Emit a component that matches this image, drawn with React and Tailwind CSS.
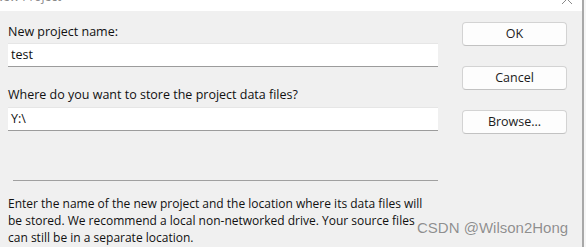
const FONT = { fontFamily: '"Open Sans", "Noto Sans", sans-serif' };

function Field({ value }) {
  return (
    <div className="h-[24px] w-[430px] bg-white border-t border-t-[#e6e6e6] border-b border-b-[#9c9c9c] flex items-center pl-[3px] text-[12.5px] text-[#111]">
      {value}
    </div>
  );
}

function Btn({ children }) {
  return (
    <button className="h-[24px] w-[105px] rounded-[4px] bg-[#fdfdfd] border border-[#d3d3d3] border-b-[#c2c2c2] text-[12.5px] text-[#1b1b1b] flex items-center justify-center">
      {children}
    </button>
  );
}

export default function App() {
  return (
    <div className="relative w-[586px] h-[247px] flex bg-white overflow-hidden" style={FONT}>
      <div className="w-[582px] flex flex-col">
        {/* title bar, mostly cut off */}
        <div className="h-[11px] bg-white relative overflow-hidden">
          <div className="absolute left-[-6px] top-[-12px] text-[12px] text-[#8a8a8a]">New Project</div>
          <svg className="absolute left-[562px] top-0" width="12" height="4" viewBox="0 0 12 4">
            <path d="M0 -6 L10 4 M10 -6 L0 4" stroke="#8a8a8a" strokeWidth="1" fill="none" />
          </svg>
        </div>

        <div className="flex-1 bg-[#f0f0f0] flex">
          <div className="pl-[8px] w-[454px] flex flex-col">
            <div className="mt-[12px] text-[12.5px] text-[#111] leading-[17px]">New project name:</div>
            <div className="mt-[3px]"><Field value="test" /></div>
            <div className="mt-[19px] text-[12.5px] text-[#111] leading-[17px]">Where do you want to store the project data files?</div>
            <div className="mt-[4px]"><Field value="Y:\" /></div>
            <div className="mt-[49px] ml-[5px] h-px w-[425px] bg-[#a0a0a0]" />
            <p className="mt-[14px] text-[12px] text-[#111] leading-[17px] whitespace-nowrap">
              Enter the name of the new project and the location where its data files will<br />
              be stored. We recommend a local non-networked drive. Your source files<br />
              can still be in a separate location.
            </p>
          </div>
          <div className="ml-[8px] pt-[11px] flex flex-col gap-[20px]">
            <Btn>OK</Btn>
            <Btn>Cancel</Btn>
            <Btn>Browse...</Btn>
          </div>
        </div>
      </div>
      <div className="w-[2px] bg-[#a8a8a8]" />
      <div className="w-[2px] bg-[#f6f6f6]" />

      <div
        className="absolute left-[417px] top-[219px] text-[15px] text-[#8f8f8f] leading-[18px]"
        style={{ fontFamily: '"Liberation Sans", Arial, sans-serif', textShadow: '0 0 1px #fff' }}
      >
        CSDN @Wilson2Hong
      </div>
    </div>
  );
}
